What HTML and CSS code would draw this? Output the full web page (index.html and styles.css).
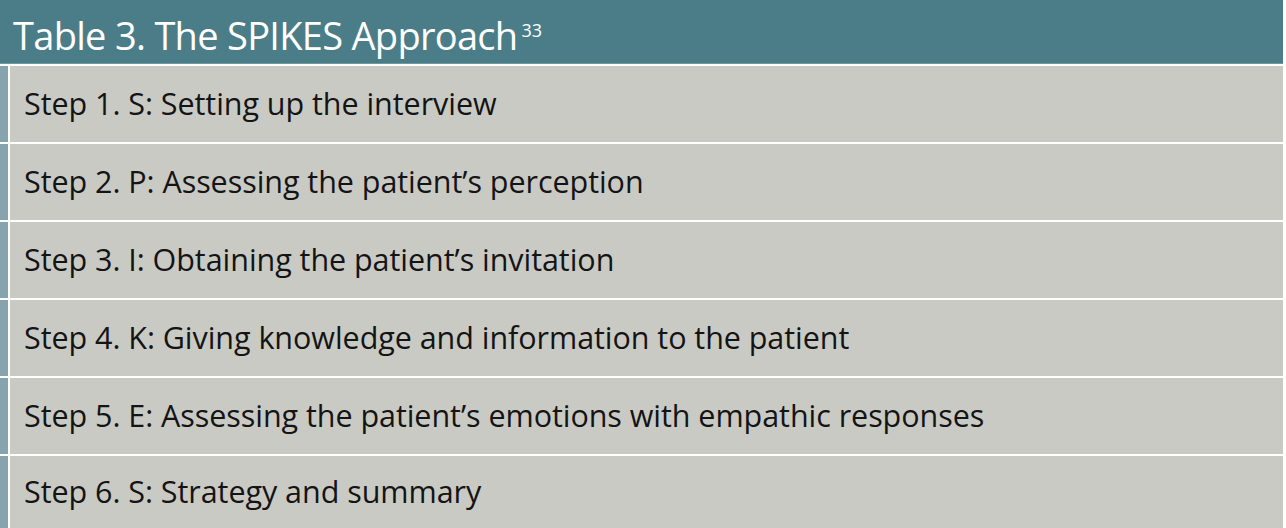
FILE: index.html
```html
<!DOCTYPE html>
<html>
<head>
<meta charset="utf-8">
<link rel="stylesheet" href="styles.css">
</head>
<body>
<div class="table">
  <div class="title">Table 3. The SPIKES Approach<sup class="ref">33</sup></div>
  <div class="rows">
    <div class="row"><div class="stripe"></div><div class="cell">Step 1. S: Setting up the interview</div></div>
    <div class="row"><div class="stripe"></div><div class="cell">Step 2. P: Assessing the patient’s perception</div></div>
    <div class="row"><div class="stripe"></div><div class="cell">Step 3. I: Obtaining the patient’s invitation</div></div>
    <div class="row"><div class="stripe"></div><div class="cell">Step 4. K: Giving knowledge and information to the patient</div></div>
    <div class="row"><div class="stripe"></div><div class="cell">Step 5. E: Assessing the patient’s emotions with empathic responses</div></div>
    <div class="row last"><div class="stripe"></div><div class="cell">Step 6. S: Strategy and summary</div></div>
  </div>
</div>
</body>
</html>
```

FILE: styles.css
```css
html, body {
  margin: 0;
  padding: 0;
  background: #ffffff;
}
body {
  width: 1286px;
  height: 528px;
  overflow: hidden;
  font-family: "Open Sans", "Lato", sans-serif;
  font-variant-ligatures: none;
}
.table {
  width: 1283px;
  display: flex;
  flex-direction: column;
  gap: 2px;
}
.title {
  height: 63px;
  border-bottom: 1px solid #6f98a1;
  background: #4a7d88;
  color: #ffffff;
  font-size: 38px;
  letter-spacing: -0.7px;
  line-height: 70px;
  padding-left: 13px;
  box-sizing: content-box;
  overflow: hidden;
}
.ref {
  font-size: 18px;
  letter-spacing: 0;
  vertical-align: 0;
  position: relative;
  top: -13px;
  margin-left: 4px;
}
.rows {
  display: flex;
  flex-direction: column;
  gap: 2px;
}
.row {
  height: 76px;
  display: flex;
  gap: 2px;
}
.row.last {
  height: 72px;
}
.stripe {
  width: 8px;
  background: #87a4ae;
}
.cell {
  flex: 1;
  background: #cacac5;
  color: #141414;
  font-size: 30.5px;
  letter-spacing: -0.05px;
  display: flex;
  align-items: center;
  padding-left: 14px;
  padding-bottom: 2px;
}
```
